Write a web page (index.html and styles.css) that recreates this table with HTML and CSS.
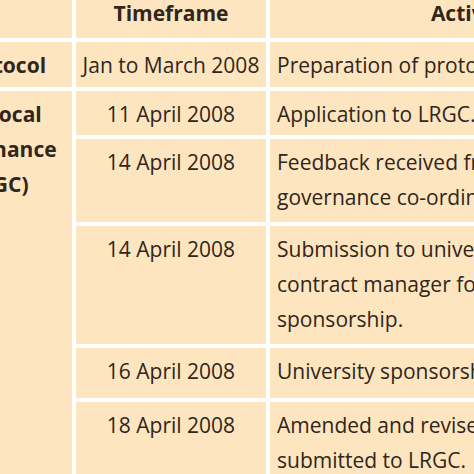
FILE: index.html
```html
<!DOCTYPE html>
<html lang="en">
<head>
<meta charset="utf-8">
<title>Timeframe table</title>
<link rel="stylesheet" href="styles.css">
</head>
<body>
<table class="plan">
  <colgroup>
    <col class="c-phase">
    <col class="c-time">
    <col class="c-act">
  </colgroup>
  <thead>
    <tr class="r-head">
      <th class="phase"></th>
      <th class="time">Timeframe</th>
      <th class="act">Activity</th>
    </tr>
  </thead>
  <tbody>
    <tr class="r1">
      <th class="phase"><span class="ln ln-protocol">Protocol</span></th>
      <td class="time">Jan to March 2008</td>
      <td class="act">Preparation of protocol.</td>
    </tr>
    <tr class="r2">
      <th class="phase" rowspan="5"><span class="ln ln-local">Local</span><span class="ln ln-gov">Governance</span><span class="ln ln-lrgc">(LRGC)</span></th>
      <td class="time">11 April 2008</td>
      <td class="act">Application to LRGC.</td>
    </tr>
    <tr class="r3">
      <td class="time">14 April 2008</td>
      <td class="act">Feedback received from research<br>governance co-ordinator.</td>
    </tr>
    <tr class="r4">
      <td class="time">14 April 2008</td>
      <td class="act">Submission to university<br>contract manager for<br>sponsorship.</td>
    </tr>
    <tr class="r5">
      <td class="time">16 April 2008</td>
      <td class="act">University sponsorship granted.</td>
    </tr>
    <tr class="r6">
      <td class="time">18 April 2008</td>
      <td class="act">Amended and revised protocol<br>submitted to LRGC.</td>
    </tr>
  </tbody>
</table>
</body>
</html>
```

FILE: styles.css
```css
html, body {
  margin: 0;
  padding: 0;
  overflow: hidden;
  background: #ffffff;
}

.plan {
  border-collapse: separate;
  border-spacing: 4px;
  background: #ffffff;
  margin-top: -14px;
  margin-left: -72px;
  table-layout: fixed;
  width: 748px;
  font-family: "Open Sans", "Liberation Sans", sans-serif;
  font-size: 21px;
  line-height: 35px;
  color: #30261b;
}

.c-phase { width: 140px; }
.c-time { width: 190px; }
.c-act { width: 402px; }

.plan th,
.plan td {
  background: #fde5bf;
  padding: 6px 0 0 0;
  vertical-align: top;
  white-space: nowrap;
  overflow: hidden;
}

.plan th { font-weight: 700; }

.plan .time { text-align: center; font-weight: 400; }
.plan thead .time { font-weight: 700; }
.plan .act { text-align: left; padding-left: 7px; font-weight: 400; }
.plan thead .act { text-align: center; padding-left: 0; font-weight: 700; }
.plan .phase { text-align: left; padding-left: 26px; }

.r-head { height: 48px; }
.r1 { height: 45px; }
.r2 { height: 44px; }
.r3 { height: 83px; }
.r4 { height: 118px; }
.r5 { height: 50px; }
.r6 { height: 90px; }

.ln { display: block; }
.ln-local { margin-left: 29px; }
.ln-gov { margin-left: -27px; }
.ln-lrgc { margin-left: 2px; }
```
